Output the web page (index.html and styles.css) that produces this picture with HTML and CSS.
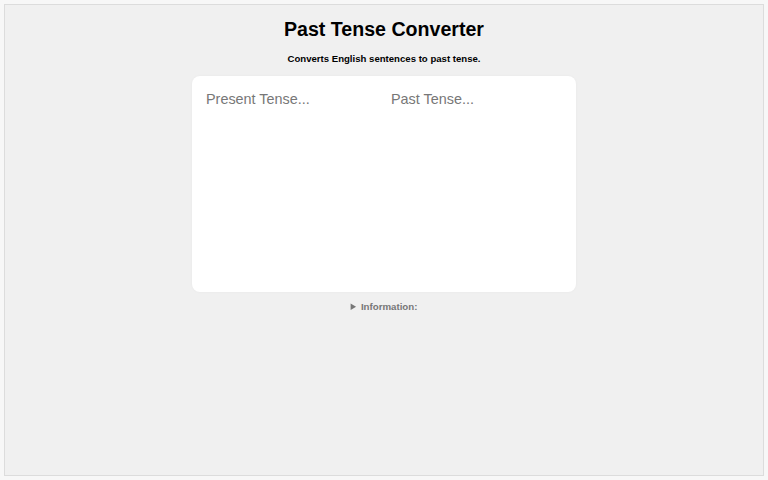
FILE: index.html
```html
<!DOCTYPE html>
<html lang="en">
<head>
  <meta charset="UTF-8">
  <meta name="viewport" content="width=device-width, initial-scale=1.0">
  <title>Past Tense Converter</title>
  <link rel="stylesheet" href="styles.css">
</head>
<body>
  <div class="app">
    <h1>Past Tense Converter</h1>
    <p class="subtitle">Converts English sentences to past tense.</p>

    <div class="converter">
      <textarea id="present" placeholder="Present Tense..."></textarea>
      <textarea id="past" placeholder="Past Tense..." readonly></textarea>
    </div>

    <details class="info">
      <summary>Information:</summary>
      <p>Type a sentence on the left and the past tense version shows up on the right.</p>
    </details>
  </div>
</body>
</html>
```

FILE: styles.css
```css
html, body {
  margin: 0;
  padding: 0;
  height: 100%;
}

body {
  font-family: "Liberation Sans", Arial, sans-serif;
  background-color: #f7f7f7;
  padding: 4px;
  box-sizing: border-box;
}

.app {
  height: 100%;
  box-sizing: border-box;
  border: 1px solid #dcdcdc;
  background-color: #f0f0f0;
  display: flex;
  flex-direction: column;
  align-items: center;
}

h1 {
  color: #000;
  font-size: 19.6px;
  margin: 13px 0 0;
}

.subtitle {
  color: #000;
  font-size: 9.6px;
  font-weight: bold;
  margin: 12px 0 0;
}

.converter {
  margin-top: 12px;
  width: 384px;
  height: 216px;
  box-sizing: border-box;
  padding: 10px;
  background-color: #fff;
  border-radius: 8px;
  box-shadow: 0 0 3px rgba(0, 0, 0, 0.04);
  display: flex;
  gap: 6px;
}

textarea {
  flex: 1;
  min-width: 0;
  border: none;
  outline: none;
  resize: none;
  padding: 5px 4px 4px;
  font-family: inherit;
  font-size: 14.4px;
  color: #333;
  background: transparent;
}

textarea::placeholder {
  color: #777;
}

.info {
  margin-top: 9px;
  font-size: 9.7px;
  color: #777;
}

.info summary {
  font-weight: bold;
  cursor: pointer;
}
```
